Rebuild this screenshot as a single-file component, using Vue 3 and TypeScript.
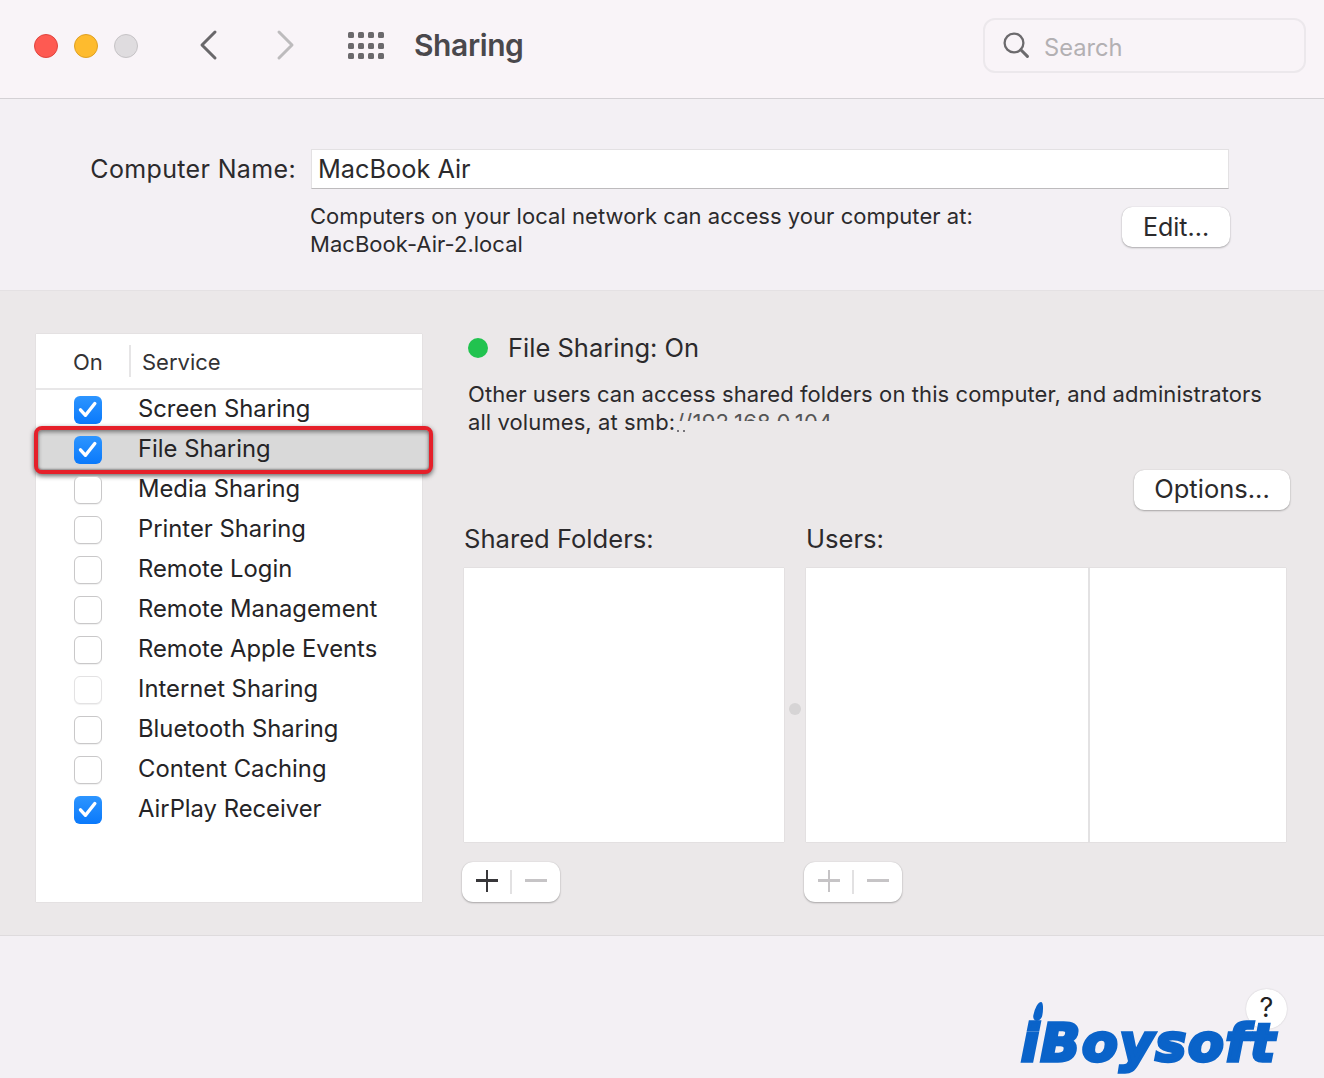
<script setup lang="ts">
interface Service { name: string; on: boolean; dim?: boolean; hl?: boolean }
const services: Service[] = [
  { name: 'Screen Sharing', on: true },
  { name: 'File Sharing', on: true, hl: true },
  { name: 'Media Sharing', on: false },
  { name: 'Printer Sharing', on: false },
  { name: 'Remote Login', on: false },
  { name: 'Remote Management', on: false },
  { name: 'Remote Apple Events', on: false },
  { name: 'Internet Sharing', on: false, dim: true },
  { name: 'Bluetooth Sharing', on: false },
  { name: 'Content Caching', on: false },
  { name: 'AirPlay Receiver', on: true },
]
const dots = Array.from({ length: 12 }, (_, i) => i)
</script>

<template>
  <div class="win">
    <header class="bar">
      <div class="lights">
        <span class="light red"></span>
        <span class="light yellow"></span>
        <span class="light grey"></span>
      </div>
      <svg class="chev first" width="22" height="32" viewBox="0 0 22 32"><path d="M17 3 L4 16 L17 29" fill="none" stroke="#69676a" stroke-width="3" stroke-linecap="round" stroke-linejoin="round"/></svg>
      <svg class="chev second" width="22" height="32" viewBox="0 0 22 32"><path d="M5 3 L18 16 L5 29" fill="none" stroke="#bdbbbd" stroke-width="3" stroke-linecap="round" stroke-linejoin="round"/></svg>
      <div class="grid"><span v-for="d in dots" :key="d" class="dot"></span></div>
      <div class="title">Sharing</div>
      <div class="search">
        <svg width="26" height="26" viewBox="0 0 26 26"><circle cx="11" cy="11" r="9.4" fill="none" stroke="#6c6a6d" stroke-width="2.3"/><path d="M17.8 17.8 L24.4 24.4" stroke="#6c6a6d" stroke-width="3" stroke-linecap="round"/></svg>
        <span>Search</span>
      </div>
    </header>

    <section class="top">
      <div class="name-row">
        <label>Computer Name:</label>
        <div class="name-input">MacBook Air</div>
      </div>
      <div class="addr-row">
        <p>Computers on your local network can access your computer at:<br>MacBook-Air-2.local</p>
        <button class="btn edit">Edit...</button>
      </div>
    </section>

    <section class="mid">
      <div class="list">
        <div class="list-head"><span class="h-on">On</span><span class="h-svc">Service</span></div>
        <div v-for="s in services" :key="s.name" class="row">
          <span v-if="s.hl" class="hl"></span>
          <span class="cb" :class="{ on: s.on, dim: s.dim }">
            <svg v-if="s.on" width="28" height="28" viewBox="0 0 28 28"><path d="M6.5 13.8 L11.5 19.3 L20.8 7.5" fill="none" stroke="#fff" stroke-width="3.4" stroke-linecap="round" stroke-linejoin="round"/></svg>
          </span>
          <span class="svc">{{ s.name }}</span>
        </div>
      </div>

      <div class="detail">
        <div class="status"><span class="led"></span><span class="status-text">File Sharing: On</span></div>
        <div class="desc">
          Other users can access shared folders on this computer, and administrators<br>
          all volumes, at smb:<span class="clipped"><span>//192.168.0.104</span></span>
        </div>
        <div class="opt-row"><button class="btn opt">Options...</button></div>
        <div class="cols">
          <div class="col shared">
            <div class="col-title">Shared Folders:</div>
            <div class="box"></div>
            <div class="pm">
              <span class="plus"></span><span class="sep"></span><span class="minus"></span>
            </div>
          </div>
          <span class="handle"></span>
          <div class="col users">
            <div class="col-title">Users:</div>
            <div class="box split"><div></div><div></div></div>
            <div class="pm off">
              <span class="plus"></span><span class="sep"></span><span class="minus"></span>
            </div>
          </div>
        </div>
      </div>
    </section>

    <footer class="foot">
      <span class="help">?</span>
      <span class="logo"><span class="drop"></span>iBoysoft</span>
    </footer>
  </div>
</template>

<style>
html, body { margin: 0; padding: 0; background: #f3f0f4; }
</style>

<style scoped>
.win {
  width: 1324px; height: 1078px; overflow: hidden;
  display: flex; flex-direction: column;
  font-family: Inter, "Liberation Sans", sans-serif;
  color: #2b2a2c;
  background: #f3f0f4;
}
.bar {
  height: 98px; box-sizing: content-box;
  background: #f9f4f8;
  border-bottom: 1px solid #d4d1d5;
  display: flex; align-items: center;
  padding-left: 34px; padding-right: 18px;
  flex: none;
}
.lights { display: flex; gap: 16px; margin-top: -6px; }
.light { width: 24px; height: 24px; border-radius: 50%; box-sizing: border-box; border: 1px solid transparent; }
.red { background: #fe5a52; border-color: #e0443e; }
.yellow { background: #febb2e; border-color: #dfa023; }
.grey { background: #dfdcdf; border-color: #c6c3c6; }
.chev { flex: none; margin-top: -8px; }
.first { margin-left: 60px; }
.second { margin-left: 54px; }
.grid {
  margin-left: 52px; margin-top: -7px;
  display: grid; grid-template-columns: repeat(4, 6px); grid-auto-rows: 6px; gap: 4.5px 4px;
  width: 36px; flex: none;
}
.dot { background: #6b696c; border-radius: 1.5px; }
.title { margin-left: 30px; margin-top: -9px; font-size: 30px; font-weight: 600; color: #4a484c; letter-spacing: -0.4px; }
.search {
  margin-left: auto; margin-top: -8px; width: 323px; height: 55px; box-sizing: border-box;
  border: 2px solid #ece8ec; border-radius: 12px;
  display: flex; align-items: center; padding-left: 18px; gap: 15px;
  font-size: 23.7px; color: #b3b0b3;
}
.search span { margin-top: 5px; }
.search svg { flex: none; }

.top {
  height: 192px; box-sizing: border-box; background: #f3f0f4; flex: none;
  border-bottom: 1px solid #e4e1e3;
  padding-top: 50px;
}
.name-row { display: flex; align-items: center; }
.name-row label { width: 296px; text-align: right; font-size: 25px; flex: none; letter-spacing: 0.35px; }
.name-input {
  margin-left: 15px; width: 918px; height: 40px; box-sizing: border-box; background: #fff;
  border: 1px solid #e3e1e3; border-bottom-color: #bdbbbd;
  padding-left: 6px; font-size: 25.3px; line-height: 38px;
}
.addr-row { display: flex; align-items: flex-start; padding-left: 310px; margin-top: 13px; }
.addr-row p { margin: 0; font-size: 22px; line-height: 28px; width: 812px; letter-spacing: 0.04px; flex: none; }
.btn {
  background: #fff; border: none; border-radius: 10px; font-family: inherit; color: #2b2a2c;
  box-shadow: 0 1px 2px rgba(0,0,0,.28), 0 0 1px rgba(0,0,0,.22);
  padding: 0; display: block;
}
.edit { width: 108px; height: 40px; font-size: 25px; margin-top: 5px; padding-bottom: 1px; }

.mid {
  height: 645px; box-sizing: border-box; flex: none; background: #ebe8e9;
  border-bottom: 1px solid #dedbdd;
  padding: 43px 0 0 36px;
  display: flex;
}
.list {
  width: 386px; height: 568px; background: #fff; flex: none; position: relative;
  box-shadow: 0 0 1px rgba(0,0,0,.18);
}
.list-head {
  height: 56px; box-sizing: border-box; border-bottom: 2px solid #e8e7e8; margin-bottom: -2px;
  display: flex; align-items: center; font-size: 22px; color: #333234;
}
.h-on { width: 95px; box-sizing: border-box; padding-left: 37px; height: 32px; line-height: 34px; border-right: 2px solid #e6e5e6; flex: none; }
.h-svc { padding-left: 11px; line-height: 34px; height: 32px; }
.row {
  height: 40px; display: flex; align-items: center; position: relative;
  font-size: 23.8px; color: #252426;
}
.hl {
  position: absolute; left: -2px; right: -11px; top: -2px; height: 48px; box-sizing: border-box;
  border: 4.5px solid #e5202a; border-radius: 8px; background: #d9d9d9;
  box-shadow: 0 2px 5px rgba(0,0,0,.6), inset 0 2px 4px rgba(0,0,0,.45), inset 0 -1px 2px rgba(0,0,0,.3);
}
.cb {
  position: relative; margin-left: 38px; width: 28px; height: 28px; box-sizing: border-box; flex: none;
  border-radius: 6px; background: #fff; border: 1px solid #c9c8c9;
  box-shadow: 0 1px 1px rgba(0,0,0,.06);
  margin-top: 3px;
}
.cb.dim { border-color: #e3e2e3; }
.cb.on { border: none; background: linear-gradient(#2d95ff, #0a79fb); box-shadow: none; }
.cb svg { display: block; }
.svc { position: relative; margin-left: 36px; margin-top: 0; }

.detail { width: 866px; flex: none; margin-left: 42px; margin-top: -1px; position: relative; }
.status { display: flex; align-items: center; gap: 20px; font-size: 25.5px; margin-left: 4px; height: 30px; color: #2b2a2c; }
.status-text { margin-top: -2px; }
.led { width: 20px; height: 20px; border-radius: 50%; background: #21c34f; flex: none; }
.desc { position: relative; margin: 17px 0 0 4px; font-size: 22px; line-height: 28px; letter-spacing: 0.09px; white-space: nowrap; height: 56px; }
.desc::after {
  content: ""; position: absolute; left: 209px; top: 50px; width: 2px; height: 2px;
  background: #77757a; box-shadow: 6px 0 0 #77757a;
}
.clipped { display: inline-block; height: 14px; overflow: hidden; vertical-align: top; color: #555; line-height: 28px; position: relative; letter-spacing: 0.25px; margin-left: 1px; }
.clipped span { display: block; clip-path: inset(0 0 15px 0); }
.opt-row { display: flex; justify-content: flex-end; margin-top: 34px; width: 826px; }
.opt { width: 156px; height: 40px; font-size: 25.5px; padding-bottom: 3px; }
.cols { display: flex; margin-top: 14px; position: relative; }
.col-title { font-size: 25.6px; height: 44px; line-height: 30px; color: #2b2a2c; }
.col.shared { width: 342px; flex: none; }
.box { height: 274px; background: #fff; box-shadow: 0 0 1px rgba(0,0,0,.2); }
.shared .box { width: 320px; }
.users .box { width: 480px; }
.split { display: grid; grid-template-columns: 284px 1fr; }
.split div:first-child { border-right: 2px solid #e3e2e3; }
.handle { position: absolute; left: 325px; top: 179px; width: 12px; height: 12px; border-radius: 50%; background: #d6d4d5; }
.pm {
  margin-top: 20px; margin-left: -2px; width: 98px; height: 40px; background: #fff; border-radius: 11px;
  box-shadow: 0 1px 2px rgba(0,0,0,.28), 0 0 1px rgba(0,0,0,.18);
  display: flex; align-items: center; position: relative;
}
.plus { position: relative; width: 22px; height: 22px; margin-left: 14px; flex: none; margin-top: -3px; }
.plus::before { content: ""; position: absolute; left: 0; right: 0; top: 9.4px; height: 2.8px; background: #38373a; }
.plus::after { content: ""; position: absolute; top: 0; bottom: 0; left: 9.6px; width: 2.8px; background: #38373a; }
.off .plus::before, .off .plus::after { background: #c6c4c6; }
.sep { width: 2px; height: 24px; background: #e2e1e2; margin-left: 12px; flex: none; }
.minus { width: 22px; height: 2.4px; background: #c6c4c6; margin-left: 13px; flex: none; margin-top: -3px; }

.foot { flex: 1; position: relative; background: #f3f0f4; }
.help {
  position: absolute; left: 1246px; top: 53px; width: 41px; height: 40px; border-radius: 50%;
  background: #fff; box-shadow: 0 0 1.5px rgba(0,0,0,.2);
  display: flex; align-items: flex-start; justify-content: center; font-size: 27px; font-weight: 400; color: #222;
  box-sizing: border-box; line-height: 38px;
}
.logo {
  position: absolute; left: 1021px; top: 77px;
  font-family: "DejaVu Sans", sans-serif; font-weight: 700; font-style: italic;
  font-size: 52px; line-height: 60px; letter-spacing: 1.8px; color: #0a63c9;
  -webkit-text-stroke: 3.4px #0a63c9;
  white-space: nowrap;
}
.drop {
  position: absolute; left: 13px; top: -11px; width: 9px; height: 19px;
  background: #0a63c9; border-radius: 60% 40% 50% 50% / 70% 70% 30% 30%;
  transform: skewX(-10deg);
}
</style>
